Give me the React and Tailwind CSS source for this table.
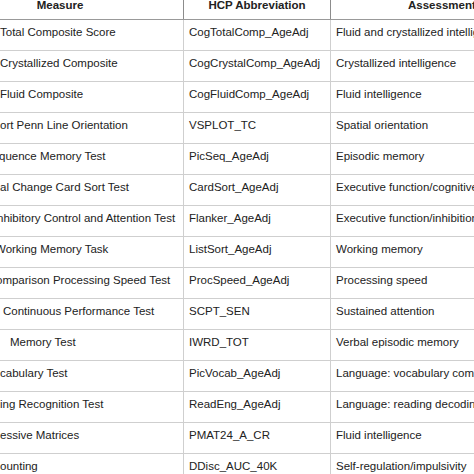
const rows = [
  ["Total Composite Score", "", "CogTotalComp_AgeAdj", "Fluid and crystallized intelligence"],
  ["Crystallized Composite", "", "CogCrystalComp_AgeAdj", "Crystallized intelligence"],
  ["Fluid Composite", "", "CogFluidComp_AgeAdj", "Fluid intelligence"],
  ["ort Penn Line Orientation", "", "VSPLOT_TC", "Spatial orientation"],
  ["quence Memory Test", "-ml-[1px]", "PicSeq_AgeAdj", "Episodic memory"],
  ["al Change Card Sort Test", "", "CardSort_AgeAdj", "Executive function/cognitive flexibility"],
  ["nhibitory Control and Attention Test", "-ml-[3px]", "Flanker_AgeAdj", "Executive function/inhibition"],
  ["Working Memory Task", "-ml-[5px]", "ListSort_AgeAdj", "Working memory"],
  ["omparison Processing Speed Test", "-ml-[4px]", "ProcSpeed_AgeAdj", "Processing speed"],
  ["Continuous Performance Test", "ml-[3px]", "SCPT_SEN", "Sustained attention"],
  ["Memory Test", "ml-[10px]", "IWRD_TOT", "Verbal episodic memory"],
  ["cabulary Test", "", "PicVocab_AgeAdj", "Language: vocabulary comprehension"],
  ["ing Recognition Test", "", "ReadEng_AgeAdj", "Language: reading decoding"],
  ["essive Matrices", "", "PMAT24_A_CR", "Fluid intelligence"],
  ["ounting", "", "DDisc_AUC_40K", "Self-regulation/impulsivity"],
];

export default function App() {
  return (
    <div className="w-[474px] h-[474px] overflow-hidden bg-white text-[#222] text-[11.5px] font-['Liberation_Sans',Arial,sans-serif]">
      <div className="grid grid-cols-[184px_147px_143px] h-[20px] border-b border-[#999] font-bold leading-[11px]">
        <div className="border-r border-[#8c8c8c] pr-[63px] text-center whitespace-nowrap">Measure</div>
        <div className="border-r border-[#8c8c8c] text-center whitespace-nowrap">HCP Abbreviation</div>
        <div className="pl-[77px] whitespace-nowrap overflow-hidden">Assessment domain</div>
      </div>
      {rows.map(([measure, offset, abbr, domain]) => (
        <div key={abbr} className="grid grid-cols-[184px_147px_143px] h-[31px] border-b border-[#cfcfcf] leading-[14px]">
          <div className="border-r border-[#cfcfcf] overflow-hidden pt-[5px]">
            <div className={"whitespace-nowrap " + offset}>{measure}</div>
          </div>
          <div className="border-r border-[#cfcfcf] overflow-hidden pt-[5px] pl-[5px] whitespace-nowrap">{abbr}</div>
          <div className="overflow-hidden pt-[5px] pl-[5px] whitespace-nowrap">{domain}</div>
        </div>
      ))}
    </div>
  );
}
